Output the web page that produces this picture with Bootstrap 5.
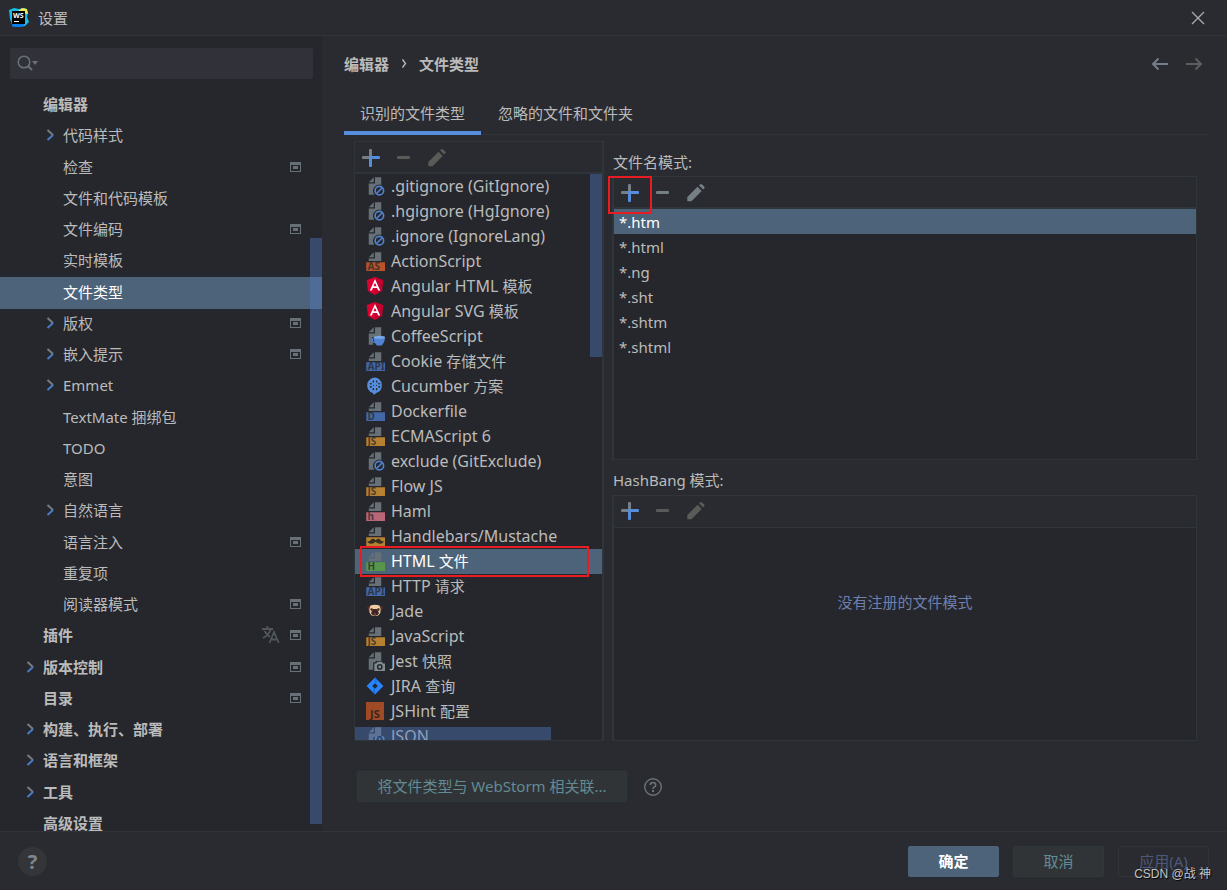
<!DOCTYPE html>
<html lang="zh-CN" data-bs-theme="dark">
<head>
<meta charset="utf-8">
<meta name="viewport" content="width=device-width, initial-scale=1">
<title>设置</title>
<link href="https://cdn.jsdelivr.net/npm/bootstrap@5.3.0/dist/css/bootstrap.min.css" rel="stylesheet">
<style>
:root{--pane:#2a2b30;--deep:#25272c;--line:#2e363a;--sel:#4d6379;--ink:#bbbbbb;--blue:#568ddd;--gray:#6e787e}
body{font:15px/20px "Noto Sans","Noto Sans CJK SC",sans-serif;background:var(--pane);color:var(--ink);overflow:hidden}
a{color:inherit;text-decoration:none}
svg{display:block;flex:none}
.titlebar{height:36px;border-bottom:1px solid #323338;padding:1px 21px 0 8px}
.sidebar{width:322px;background:var(--deep)}
.search-box{margin:12px 9px 10px 10px;height:31px;background:#313239;border-radius:2px;padding:0 7px}
.search-box input{background:transparent;border:0;box-shadow:none;outline:0;color:var(--ink);min-width:0}
.tree li{height:31px}
.tree li:nth-child(4n+3),.tree li:first-child{height:32px}
.tree a{height:100%;padding:0 21px 2px 23px}
.tree a.sub{padding-left:43px}
.tree a.top{font-weight:700}
.tree a.active{background:var(--sel);color:#fff}
.twisty{width:20px;flex:none;padding-left:3px}
.thumb{position:absolute;background:rgba(81,120,190,.43);pointer-events:none}
.thumb-tree{right:0;width:12px;top:202px;bottom:7px}
.main-pane{padding:0 20px 0 22px}
.crumbs{height:56px;font-weight:700}
.crumbs-sep{margin:0 12px 0 13px}
.page-tabs{border-bottom:1px solid var(--line);height:43px;gap:1px}
.page-tabs .nav-link{color:var(--ink);padding:11px 16px 8px;border-bottom:4px solid transparent;height:43px;line-height:20px}
.page-tabs .nav-link.active{border-color:var(--blue)}
.panes{margin:6px 10px 0;gap:9px}
.file-pane{width:250px}
.panel{border:1px solid var(--line);border-left-width:2px;background:var(--deep)}
.side-panel{margin-left:-1px}
.file-pane.panel{border-left-width:1px;border-right-width:2px}
.tools{height:32px;background:var(--pane);border-bottom:2px solid var(--line);padding:2px 7px 0}
.tools-thin{padding-top:0;border-bottom-width:1px}
.tools button{width:33px;flex:none;background:none;border:0;padding:0;display:flex;color:#757f85}
.tools button:disabled{color:#5a5a59}
.files li{height:25px;font-size:16px;line-height:24px}
.files b{font-weight:400;font-size:15px}
.files a{height:25px;padding-left:10px;gap:6px;white-space:nowrap}
.files a.active,.patterns a.active{background:var(--sel);color:#fff}
.file-thumb{right:0;top:0;width:12px;height:183px}
.file-hthumb{left:0;bottom:0;width:196px;height:13px}
.patterns a{height:25px;padding-left:5px;line-height:26px}
.label-top{margin-top:11px;margin-bottom:4px}
.label-hash{margin-top:10px;margin-bottom:5px}
.grow-a{flex:15 1 0}.grow-b{flex:13 1 0}
.callout-box{position:absolute;border:2px solid #e81c22;pointer-events:none;z-index:3}
.callout-plus{left:-6px;top:-1px;width:44px;height:38px}
.callout-file{left:5px;right:13px;top:-3px;height:31px}
.empty-note{color:#6f7fae;padding-bottom:64px}
.assoc{margin:30px 13px 29px}
.dlg-btn{height:31px;border-radius:2px;border:1px solid #30383a;background:#313437;color:#628b93;padding:0;width:91px;line-height:29px;font-size:15px}
.dlg-btn.wide{width:270px}
.dlg-btn.ok{background:var(--sel);border-color:var(--sel);color:#fff;font-weight:700}
.dlg-btn:disabled{background:transparent;border-color:#313338;color:#4f5878;opacity:1}
.footer-bar{height:59px;border-top:1px solid #323338;padding:0 18px}
.help-btn{width:29px;height:29px;border:0;border-radius:50%;background:#333538;color:#7d868b;font:700 20px/29px "Noto Sans",sans-serif;padding:0}
.stamp{position:absolute;right:16px;bottom:7px;font:12px/18px "Liberation Sans","Noto Sans CJK SC",sans-serif;color:#c4c4c6;text-shadow:1px 1px 1px #000}
.badge-ink{font:700 8px "Noto Sans",sans-serif;fill:#25272c;fill-opacity:.75}
</style>
</head>
<body class="vh-100 d-flex flex-column position-relative">
<svg width="0" height="0" class="position-absolute" aria-hidden="true">
<symbol id="doc-top" viewBox="0 0 16 16"><path fill="#667076" d="M7 1 3 5h4zM8 1v5H3v2h10V1z"/></symbol>
<symbol id="ignored" viewBox="0 0 16 16"><path fill="#667076" d="M7 1 3 5h4zM8 1v5H3v9h4.500A5 5 0 0 1 13 7.200V1z"/><g fill="none" stroke="#5283d0" stroke-width="1.300"><circle cx="11.500" cy="11.700" r="3.400"/><path d="m9.200 14 4.600-4.600"/></g></symbol>
<symbol id="angular" viewBox="0 0 16 16"><path fill="#dd0031" d="M8 0 .6 2.700l1.100 9.700L8 16z"/><path fill="#c3002f" d="m8 0 7.400 2.700-1.100 9.700L8 16z"/><path fill="#fff" d="M8 1.800 3.400 12h1.800l.9-2.300h3.800l.9 2.300h1.800zm0 3.300 1.400 3.200H6.600z"/></symbol>
<symbol id="coffee" viewBox="0 0 16 16"><path fill="#667076" d="M7 1 3 5h4zM8 1v5H3v9h3.500L5.500 9H8l1-1h4V1z"/><path fill="#5283d0" d="M7 9h9c0 3.500-1.500 5-2.500 6.500h-4C8.300 14 7 12.500 7 9z"/><ellipse cx="11.500" cy="9" rx="4.500" ry="1.200" fill="#79a7ec"/><path d="M7 10.500H5.700q0 2.500 2.300 2.500" fill="none" stroke="#5283d0"/></symbol>
<symbol id="cucumber" viewBox="0 0 16 16"><path fill="#568ddd" d="M8 .5a7 7 0 0 0-2.300 13.600L7 15.800 9.500 14A7 7 0 0 0 8 .5z"/><g fill="#25272c"><ellipse cx="6.500" cy="4" rx=".7" ry="1"/><ellipse cx="9.500" cy="4" rx=".7" ry="1"/><ellipse cx="4.300" cy="6" rx="1" ry=".7"/><ellipse cx="11.700" cy="6" rx="1" ry=".7"/><ellipse cx="4.300" cy="8.800" rx="1" ry=".7"/><ellipse cx="11.700" cy="8.800" rx="1" ry=".7"/><ellipse cx="6.500" cy="10.800" rx=".7" ry="1"/><ellipse cx="9.500" cy="10.800" rx=".7" ry="1"/><circle cx="6.700" cy="7.400" r=".5"/><circle cx="9.300" cy="7.400" r=".5"/></g></symbol>
<symbol id="pug" viewBox="0 0 16 16"><path fill="#572f28" d="M1 4.500 4.500 3l7 0L15 4.500l-1.500 4h-11z"/><path fill="#efcca3" d="M4 3.200q4-1.600 8 0 1.400 2.800.8 5.800-1 3.500-4.800 3.500T3.200 9Q2.600 6 4 3.200z"/><path fill="#3b2421" d="M6.500 6.200h3q2 2 2 4-1.200 2-3.500 2t-3.500-2q0-2 2-4z"/><circle cx="5" cy="6.600" r="1.100" fill="#3b2421"/><circle cx="11" cy="6.600" r="1.100" fill="#3b2421"/><path fill="#ad6d65" d="M6.800 10.200h2.400L8 11.400z"/></symbol>
<symbol id="jest" viewBox="0 0 16 16"><path fill="#667076" d="M7 1 3 5h4zM8 1v5H3v9h3.500V9H8l1-1h4V1z"/><path fill="#7f8b91" d="M7.500 10H9l1-1.500h3.500l1 1.500H16v6H7.500z"/><circle cx="11.800" cy="12.700" r="1.700" fill="none" stroke="#25272c" stroke-width="1.200"/></symbol>
<symbol id="jira" viewBox="0 0 16 16"><path fill="#2684ff" fill-rule="evenodd" d="m8 .5 7.500 7.500L8 15.500.5 8zM8 5.500 5.500 8 8 10.500 10.500 8z"/><path fill="#1a6fe6" d="m8 .5 1.500 1.500v3.500L8 5.500zM8 15.500 6.500 14v-3.500H8z"/></symbol>
<symbol id="json" viewBox="0 0 16 16"><path fill="#667076" d="M7 1 3 5h4zM8 1v5H3v9h3.500V9H8l1-1h4V1z"/><path d="M10 8.500q-1.500 0-1.500 2T7 12.500q1.500 0 1.500 2M13.500 8.500q1.500 0 1.500 2t1 2q-1 0-1 2M11.700 9.500v2" fill="none" stroke="#568ddd" stroke-width="1.200"/></symbol>
<symbol id="chev" viewBox="0 0 10 14"><path d="m1.500 2 5.500 5" fill="none" stroke="#747d82" stroke-width="2"/><path d="m7 7-5.500 5" fill="none" stroke="#4b7bc4" stroke-width="2"/></symbol>
<symbol id="proj" viewBox="0 0 11 10"><path fill="#667076" fill-rule="evenodd" d="M0 0h11v10H0zM1 3v6h9V3z"/><path fill="#667076" d="M3 4h5v3H3z"/></symbol>
<symbol id="plus" viewBox="0 0 18 18"><path fill="#757f85" d="M7 1q0-1 1-1h1q1 0 1 1v6H7v3H1q-1 0-1-1V8q0-1 1-1h6z"/><path fill="#568ddd" d="M7 7h10q1 0 1 1v1q0 1-1 1h-7v7q0 1-1 1H8q-1 0-1-1z"/></symbol>
<symbol id="minus" viewBox="0 0 18 18"><rect x="2" y="7" width="13" height="3" rx="1" fill="currentColor"/></symbol>
<symbol id="pencil" viewBox="0 0 18 18"><path fill="currentColor" d="m10.500 2.800 4.200 4.200L4.500 17.200H.3V13zM12 1.400l1-1q1-.8 2 0l2.200 2.200q.8 1 0 2l-1 1z"/></symbol>
</svg>

<header class="titlebar d-flex align-items-center">
  <svg width="22" height="22" viewBox="0 0 22 22" aria-hidden="true"><path fill="#16bcea" d="m1 3 5-2 5 1 6-1 3 4-1 5 2 5-4 4-6 1-6 0L2 12z"/><path fill="#eeea5b" d="m10 4 4-3 5 1 1 5-5-1z"/><path fill="#087bed" d="m3 15 2 5h8l4-3z"/><rect x="4" y="4" width="13" height="13"/><text x="5" y="11" fill="#fff" style="font:700 7px 'Noto Sans',sans-serif">WS</text><path fill="#fff" d="M6 14h5v1H6z"/></svg>
  <span class="ms-2">设置</span>
  <button class="ms-auto border-0 bg-transparent p-0" aria-label="关闭"><svg width="16" height="16" viewBox="0 0 16 16"><path d="m2 2 12 12M14 2 2 14" stroke="#aaacae" stroke-width="1.300"/></svg></button>
</header>

<div class="d-flex flex-fill" style="min-height:0">
  <aside class="sidebar flex-shrink-0 d-flex flex-column position-relative overflow-hidden">
    <div class="search-box d-flex align-items-center flex-shrink-0">
      <svg width="22" height="18" viewBox="0 0 22 18" aria-hidden="true"><g fill="none" stroke="#697177"><circle cx="7" cy="8" r="5.800" stroke-width="1.500"/><path d="m11 12 4 4" stroke-width="2"/></g><path fill="#697177" d="M15 7h6l-3 4z"/></svg>
      <input type="text" class="flex-fill" aria-label="搜索设置">
    </div>
    <ul class="tree list-unstyled m-0">
      <li><a href="#" class="top d-flex align-items-center"><span class="twisty"></span>编辑器</a></li>
      <li><a href="#" class="sub d-flex align-items-center"><span class="twisty"><svg width="10" height="14"><use href="#chev"/></svg></span>代码样式</a></li>
      <li><a href="#" class="sub d-flex align-items-center"><span class="twisty"></span>检查<svg class="ms-auto" width="11" height="10"><use href="#proj"/></svg></a></li>
      <li><a href="#" class="sub d-flex align-items-center"><span class="twisty"></span>文件和代码模板</a></li>
      <li><a href="#" class="sub d-flex align-items-center"><span class="twisty"></span>文件编码<svg class="ms-auto" width="11" height="10"><use href="#proj"/></svg></a></li>
      <li><a href="#" class="sub d-flex align-items-center"><span class="twisty"></span>实时模板</a></li>
      <li><a href="#" class="sub active d-flex align-items-center"><span class="twisty"></span>文件类型</a></li>
      <li><a href="#" class="sub d-flex align-items-center"><span class="twisty"><svg width="10" height="14"><use href="#chev"/></svg></span>版权<svg class="ms-auto" width="11" height="10"><use href="#proj"/></svg></a></li>
      <li><a href="#" class="sub d-flex align-items-center"><span class="twisty"><svg width="10" height="14"><use href="#chev"/></svg></span>嵌入提示<svg class="ms-auto" width="11" height="10"><use href="#proj"/></svg></a></li>
      <li><a href="#" class="sub d-flex align-items-center"><span class="twisty"><svg width="10" height="14"><use href="#chev"/></svg></span>Emmet</a></li>
      <li><a href="#" class="sub d-flex align-items-center"><span class="twisty"></span>TextMate 捆绑包</a></li>
      <li><a href="#" class="sub d-flex align-items-center"><span class="twisty"></span>TODO</a></li>
      <li><a href="#" class="sub d-flex align-items-center"><span class="twisty"></span>意图</a></li>
      <li><a href="#" class="sub d-flex align-items-center"><span class="twisty"><svg width="10" height="14"><use href="#chev"/></svg></span>自然语言</a></li>
      <li><a href="#" class="sub d-flex align-items-center"><span class="twisty"></span>语言注入<svg class="ms-auto" width="11" height="10"><use href="#proj"/></svg></a></li>
      <li><a href="#" class="sub d-flex align-items-center"><span class="twisty"></span>重复项</a></li>
      <li><a href="#" class="sub d-flex align-items-center"><span class="twisty"></span>阅读器模式<svg class="ms-auto" width="11" height="10"><use href="#proj"/></svg></a></li>
      <li><a href="#" class="top d-flex align-items-center"><span class="twisty"></span>插件<svg class="ms-auto" width="18" height="18" viewBox="0 0 18 18" aria-hidden="true"><g fill="none" stroke="#50565b" stroke-width="1.800"><path d="M0 3h11M5.500 0v3M9 3Q7 9 1 12M2.500 5Q5 9 8 11M7.500 17 12 6l4.800 11M9 13.500h6.500"/></g></svg><svg style="margin-left:10px" width="11" height="10"><use href="#proj"/></svg></a></li>
      <li><a href="#" class="top d-flex align-items-center"><span class="twisty"><svg width="10" height="14"><use href="#chev"/></svg></span>版本控制<svg class="ms-auto" width="11" height="10"><use href="#proj"/></svg></a></li>
      <li><a href="#" class="top d-flex align-items-center"><span class="twisty"></span>目录<svg class="ms-auto" width="11" height="10"><use href="#proj"/></svg></a></li>
      <li><a href="#" class="top d-flex align-items-center"><span class="twisty"><svg width="10" height="14"><use href="#chev"/></svg></span>构建、执行、部署</a></li>
      <li><a href="#" class="top d-flex align-items-center"><span class="twisty"><svg width="10" height="14"><use href="#chev"/></svg></span>语言和框架</a></li>
      <li><a href="#" class="top d-flex align-items-center"><span class="twisty"><svg width="10" height="14"><use href="#chev"/></svg></span>工具</a></li>
      <li><a href="#" class="top d-flex align-items-center"><span class="twisty"></span>高级设置</a></li>
    </ul>
    <div class="thumb thumb-tree"></div>
  </aside>

  <main class="main-pane flex-fill d-flex flex-column" style="min-width:0">
    <div class="crumbs d-flex align-items-center flex-shrink-0">
      <span>编辑器</span><svg class="crumbs-sep" width="5" height="9" viewBox="0 0 5 9"><path d="m.5.500 3 4-3 4" fill="none" stroke="#bbb" stroke-width="1.300"/></svg><span>文件类型</span>
      <div class="ms-auto d-flex gap-3 me-1">
        <button class="border-0 bg-transparent p-0" aria-label="后退"><svg width="18" height="14" viewBox="0 0 18 14"><path d="M17 7H2M7.500 1.500 2 7l5.500 5.500" fill="none" stroke="#747e86" stroke-width="2"/></svg></button>
        <button class="border-0 bg-transparent p-0" aria-label="前进" disabled><svg width="18" height="14" viewBox="0 0 18 14"><path d="M1 7h15M10.500 1.500 16 7l-5.500 5.500" fill="none" stroke="#5d5e5e" stroke-width="2"/></svg></button>
      </div>
    </div>
    <nav class="nav page-tabs flex-shrink-0">
      <a class="nav-link active" href="#">识别的文件类型</a>
      <a class="nav-link" href="#">忽略的文件和文件夹</a>
    </nav>

    <div class="panes d-flex flex-fill" style="min-height:0">
      <section class="file-pane panel flex-shrink-0 d-flex flex-column">
        <div class="tools d-flex align-items-center flex-shrink-0">
          <button aria-label="添加"><svg width="18" height="18"><use href="#plus"/></svg></button>
          <button aria-label="移除" disabled><svg width="18" height="18"><use href="#minus"/></svg></button>
          <button aria-label="编辑" disabled><svg width="18" height="18"><use href="#pencil"/></svg></button>
        </div>
        <div class="flex-fill position-relative overflow-hidden" style="min-height:0">
          <ul class="files list-unstyled m-0">
            <li><a href="#" class="d-flex align-items-center"><svg width="20" height="20"><use href="#ignored"/></svg>.gitignore (GitIgnore)</a></li>
            <li><a href="#" class="d-flex align-items-center"><svg width="20" height="20"><use href="#ignored"/></svg>.hgignore (HgIgnore)</a></li>
            <li><a href="#" class="d-flex align-items-center"><svg width="20" height="20"><use href="#ignored"/></svg>.ignore (IgnoreLang)</a></li>
            <li><a href="#" class="d-flex align-items-center"><svg width="20" height="20" viewBox="0 0 16 16"><use href="#doc-top"/><path fill="#b9532a" d="M1 9h15v7H1z"/><text class="badge-ink" x="2" y="15">AS</text></svg>ActionScript</a></li>
            <li><a href="#" class="d-flex align-items-center"><svg width="20" height="18"><use href="#angular"/></svg><span>Angular HTML <b>模板</b></span></a></li>
            <li><a href="#" class="d-flex align-items-center"><svg width="20" height="18"><use href="#angular"/></svg><span>Angular SVG <b>模板</b></span></a></li>
            <li><a href="#" class="d-flex align-items-center"><svg width="20" height="20"><use href="#coffee"/></svg>CoffeeScript</a></li>
            <li><a href="#" class="d-flex align-items-center"><svg width="20" height="20" viewBox="0 0 16 16"><use href="#doc-top"/><path fill="#4468a6" d="M1 9h15v7H1z"/><text class="badge-ink" x="2" y="15">API</text></svg><span>Cookie <b>存储文件</b></span></a></li>
            <li><a href="#" class="d-flex align-items-center"><svg width="20" height="18"><use href="#cucumber"/></svg><span>Cucumber <b>方案</b></span></a></li>
            <li><a href="#" class="d-flex align-items-center"><svg width="20" height="20" viewBox="0 0 16 16"><use href="#doc-top"/><path fill="#4468a6" d="M1 9h15v7H1z"/><text class="badge-ink" x="2" y="15">D</text></svg>Dockerfile</a></li>
            <li><a href="#" class="d-flex align-items-center"><svg width="20" height="20" viewBox="0 0 16 16"><use href="#doc-top"/><path fill="#b68130" d="M1 9h15v7H1z"/><text class="badge-ink" x="2" y="15">JS</text></svg>ECMAScript 6</a></li>
            <li><a href="#" class="d-flex align-items-center"><svg width="20" height="20"><use href="#ignored"/></svg>exclude (GitExclude)</a></li>
            <li><a href="#" class="d-flex align-items-center"><svg width="20" height="20" viewBox="0 0 16 16"><use href="#doc-top"/><path fill="#b68130" d="M1 9h15v7H1z"/><text class="badge-ink" x="2" y="15">JS</text></svg>Flow JS</a></li>
            <li><a href="#" class="d-flex align-items-center"><svg width="20" height="20" viewBox="0 0 16 16"><use href="#doc-top"/><path fill="#b96676" d="M1 9h15v7H1z"/><text class="badge-ink" x="2" y="15">h</text></svg>Haml</a></li>
            <li><a href="#" class="d-flex align-items-center"><svg width="20" height="20" viewBox="0 0 16 16"><use href="#doc-top"/><path fill="#b68130" d="M1 9h15v7H1z"/><path fill="#38301f" d="M8.500 11.300q-2.500-2.300-4 0-.8 1.200-2.500.7.500 2.400 3 2.200 2-.2 3.500-1.700 1.500 1.500 3.500 1.700 2.500.2 3-2.200-1.700.5-2.500-.7-1.500-2.300-4 0z"/></svg>Handlebars/Mustache</a></li>
            <li class="position-relative"><a href="#" class="active d-flex align-items-center"><svg width="20" height="20" viewBox="0 0 16 16"><use href="#doc-top"/><path fill="#58964a" d="M1 9h15v7H1z"/><text class="badge-ink" x="2" y="15">H</text></svg><span>HTML <b>文件</b></span></a><span class="callout-box callout-file"></span></li>
            <li><a href="#" class="d-flex align-items-center"><svg width="20" height="20" viewBox="0 0 16 16"><use href="#doc-top"/><path fill="#4468a6" d="M1 9h15v7H1z"/><text class="badge-ink" x="2" y="15">API</text></svg><span>HTTP <b>请求</b></span></a></li>
            <li><a href="#" class="d-flex align-items-center"><svg width="20" height="18"><use href="#pug"/></svg>Jade</a></li>
            <li><a href="#" class="d-flex align-items-center"><svg width="20" height="20" viewBox="0 0 16 16"><use href="#doc-top"/><path fill="#b68130" d="M1 9h15v7H1z"/><text class="badge-ink" x="2" y="15">JS</text></svg>JavaScript</a></li>
            <li><a href="#" class="d-flex align-items-center"><svg width="20" height="20"><use href="#jest"/></svg><span>Jest <b>快照</b></span></a></li>
            <li><a href="#" class="d-flex align-items-center"><svg width="20" height="18"><use href="#jira"/></svg><span>JIRA <b>查询</b></span></a></li>
            <li><a href="#" class="d-flex align-items-center"><svg width="20" height="18" viewBox="0 0 20 18"><path fill="#a04b25" d="M1 0h18v18H1z"/><text x="5" y="16" fill="#3a2620" style="font:700 11px 'Noto Sans',sans-serif">JS</text></svg><span>JSHint <b>配置</b></span></a></li>
            <li><a href="#" class="d-flex align-items-center"><svg width="20" height="20"><use href="#json"/></svg>JSON</a></li>
          </ul>
          <div class="thumb file-thumb"></div>
          <div class="thumb file-hthumb"></div>
        </div>
      </section>

      <section class="flex-fill d-flex flex-column" style="min-width:0">
        <div class="label-top">文件名模式:</div>
        <div class="panel side-panel grow-a d-flex flex-column position-relative" style="min-height:0">
          <div class="tools d-flex align-items-center flex-shrink-0">
            <button aria-label="添加模式"><svg width="18" height="18"><use href="#plus"/></svg></button>
            <button aria-label="移除模式"><svg width="18" height="18"><use href="#minus"/></svg></button>
            <button aria-label="编辑模式"><svg width="18" height="18"><use href="#pencil"/></svg></button>
          </div>
          <ul class="patterns list-unstyled m-0">
            <li><a href="#" class="active d-block">*.htm</a></li>
            <li><a href="#" class="d-block">*.html</a></li>
            <li><a href="#" class="d-block">*.ng</a></li>
            <li><a href="#" class="d-block">*.sht</a></li>
            <li><a href="#" class="d-block">*.shtm</a></li>
            <li><a href="#" class="d-block">*.shtml</a></li>
          </ul>
          <span class="callout-box callout-plus"></span>
        </div>
        <div class="label-hash">HashBang 模式:</div>
        <div class="panel side-panel grow-b d-flex flex-column" style="min-height:0">
          <div class="tools tools-thin d-flex align-items-center flex-shrink-0">
            <button aria-label="添加 HashBang"><svg width="18" height="18"><use href="#plus"/></svg></button>
            <button aria-label="移除 HashBang" disabled><svg width="18" height="18"><use href="#minus"/></svg></button>
            <button aria-label="编辑 HashBang" disabled><svg width="18" height="18"><use href="#pencil"/></svg></button>
          </div>
          <div class="empty-note flex-fill d-flex align-items-center justify-content-center">没有注册的文件模式</div>
        </div>
      </section>
    </div>

    <div class="assoc d-flex align-items-center flex-shrink-0">
      <button class="dlg-btn wide">将文件类型与 WebStorm 相关联...</button>
      <svg class="ms-3" width="20" height="20" viewBox="0 0 20 20" role="img" aria-label="帮助"><circle cx="10" cy="10" r="8.300" fill="none" stroke="#6b7276" stroke-width="1.400"/><path d="M7.300 8q0-2.500 2.700-2.500T12.700 8q0 1.200-1.400 2-1.300.800-1.300 2" fill="none" stroke="#6b7276" stroke-width="1.600"/><path fill="#6b7276" d="M9 13h2v2H9z"/></svg>
    </div>
  </main>
</div>

<footer class="footer-bar d-flex align-items-center flex-shrink-0">
  <button class="help-btn" aria-label="帮助">?</button>
  <div class="ms-auto d-flex" style="gap:14px">
    <button class="dlg-btn ok">确定</button>
    <button class="dlg-btn">取消</button>
    <button class="dlg-btn" disabled>应用(A)</button>
  </div>
</footer>
<div class="stamp">CSDN @战 神</div>
<script src="https://cdn.jsdelivr.net/npm/bootstrap@5.3.0/dist/js/bootstrap.bundle.min.js"></script>
</body>
</html>
